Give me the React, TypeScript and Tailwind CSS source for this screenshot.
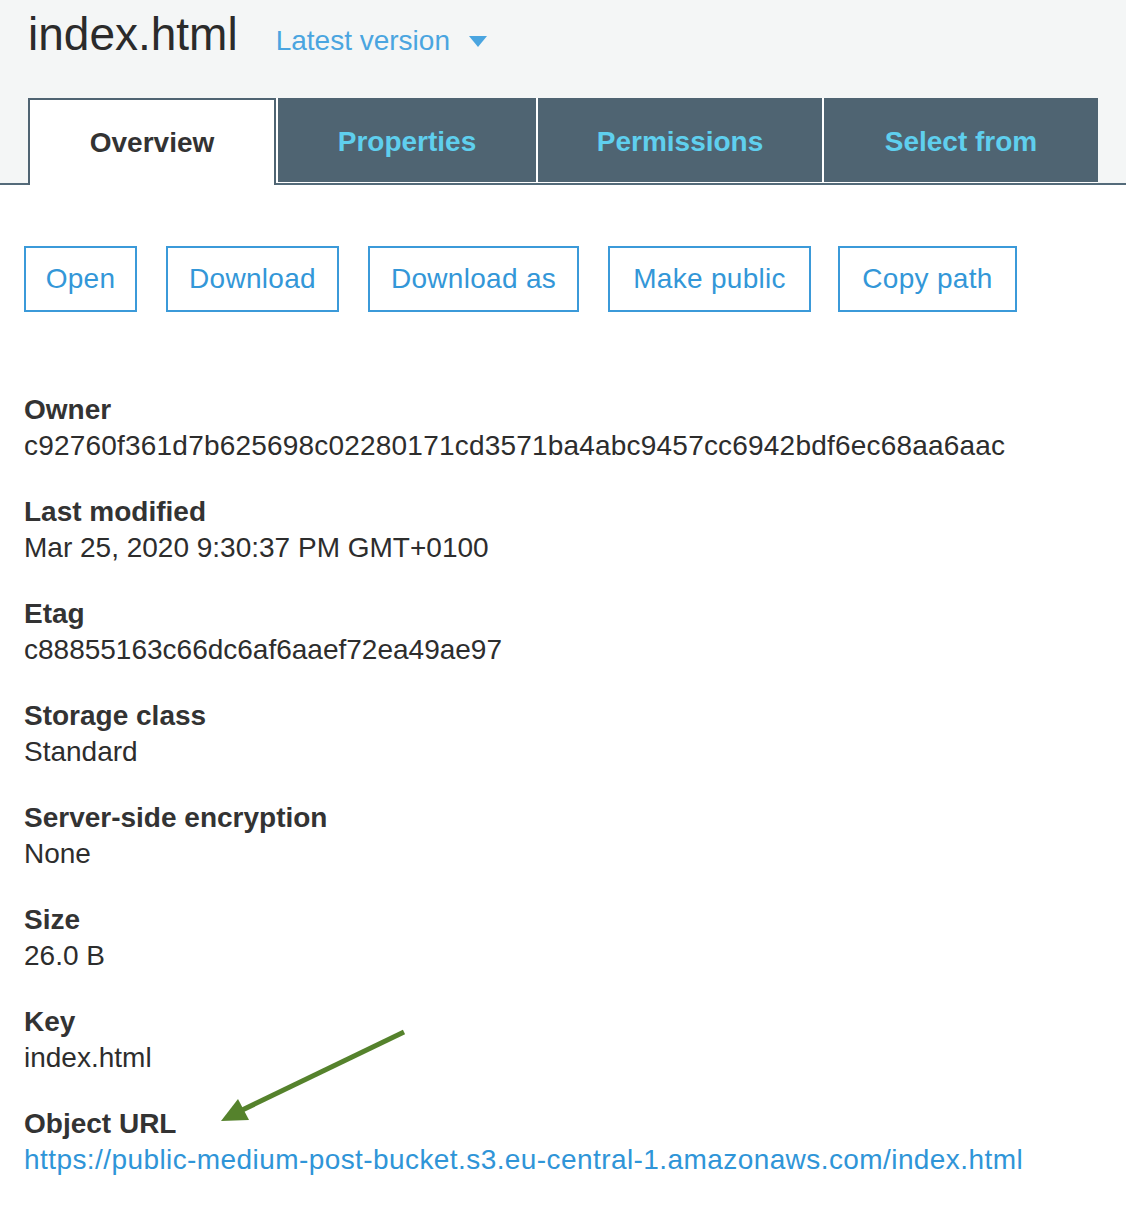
import React from "react";

const fields: { label: string; value: string; link?: boolean; track?: string }[] = [
  {
    label: "Owner",
    value: "c92760f361d7b625698c02280171cd3571ba4abc9457cc6942bdf6ec68aa6aac",
    track: "tracking-[0.2px]",
  },
  { label: "Last modified", value: "Mar 25, 2020 9:30:37 PM GMT+0100" },
  { label: "Etag", value: "c88855163c66dc6af6aaef72ea49ae97" },
  { label: "Storage class", value: "Standard" },
  { label: "Server-side encryption", value: "None" },
  { label: "Size", value: "26.0 B" },
  { label: "Key", value: "index.html" },
  {
    label: "Object URL",
    value: "https://public-medium-post-bucket.s3.eu-central-1.amazonaws.com/index.html",
    link: true,
    track: "tracking-[0.42px]",
  },
];

const actions = [
  { label: "Open", w: "w-[113px]" },
  { label: "Download", w: "w-[173px]" },
  { label: "Download as", w: "w-[211px]" },
  { label: "Make public", w: "w-[203px]" },
  { label: "Copy path", w: "w-[179px] -ml-[2px]" },
];

export default function App() {
  return (
    <div className="relative min-h-[1208px] w-full bg-white font-['Liberation_Sans',Arial,sans-serif] text-[#2d2d2d]">
      {/* header + tabs */}
      <div className="bg-[#f4f6f6]">
        <div className="flex h-[98px] items-baseline pl-[28px] pt-[11px]">
          <h1 className="text-[46px] leading-[46px] text-[#2b2b2b]">index.html</h1>
          <button className="ml-[38px] flex items-center text-[28px] leading-[46px] text-[#4aa5e0]">
            Latest version
            <svg width="18" height="11" viewBox="0 0 18 11" className="ml-[19px]">
              <polygon points="0,0 18,0 9,11" fill="#4aa5e0" />
            </svg>
          </button>
        </div>
        <div className="flex h-[87px] items-start border-b-2 border-[#546b7a] pl-[28px]">
          <div className="-mb-[2px] flex h-[87px] w-[248px] items-center justify-center border-2 border-b-0 border-[#4f6472] bg-white text-[28px] font-bold text-[#333]">
            Overview
          </div>
          {[
            { t: "Properties", w: "w-[260px]" },
            { t: "Permissions", w: "w-[286px]" },
            { t: "Select from", w: "w-[276px]" },
          ].map((tab) => (
            <div
              key={tab.t}
              className={`flex h-[85px] ${tab.w} items-center justify-center border-b border-l-2 border-white bg-[#4f6472] pt-[3px] text-[28px] font-bold text-[#5fcfee]`}
            >
              {tab.t}
            </div>
          ))}
        </div>
      </div>

      {/* actions */}
      <div className="mt-[61px] flex gap-[29px] pl-[24px]">
        {actions.map((a) => (
          <button
            key={a.label}
            className={`flex h-[66px] ${a.w} items-center justify-center border-2 border-[#3b9ad9] text-[28px] tracking-[0.3px] text-[#3397d8]`}
          >
            {a.label}
          </button>
        ))}
      </div>

      {/* details */}
      <div className="mt-[80px] flex flex-col gap-[30px] pl-[24px]">
        {fields.map((f) => (
          <div key={f.label} className="flex flex-col">
            <div className="text-[28px] font-bold leading-[36px] text-[#333]">{f.label}</div>
            {f.link ? (
              <a href="#" className={`text-[28px] leading-[36px] text-[#2f95d8] ${f.track ?? ""}`}>
                {f.value}
              </a>
            ) : (
              <div className={`text-[28px] leading-[36px] text-[#2d2d2d] ${f.track ?? ""}`}>{f.value}</div>
            )}
          </div>
        ))}
      </div>

      {/* annotation arrow */}
      <svg
        className="pointer-events-none absolute left-[210px] top-[1020px]"
        width="210"
        height="110"
        viewBox="210 1020 210 110"
      >
        <line x1="404" y1="1032" x2="236" y2="1113" stroke="#55822c" strokeWidth="5" />
        <polygon points="221,1121 238,1099 249,1120" fill="#55822c" />
      </svg>
    </div>
  );
}
